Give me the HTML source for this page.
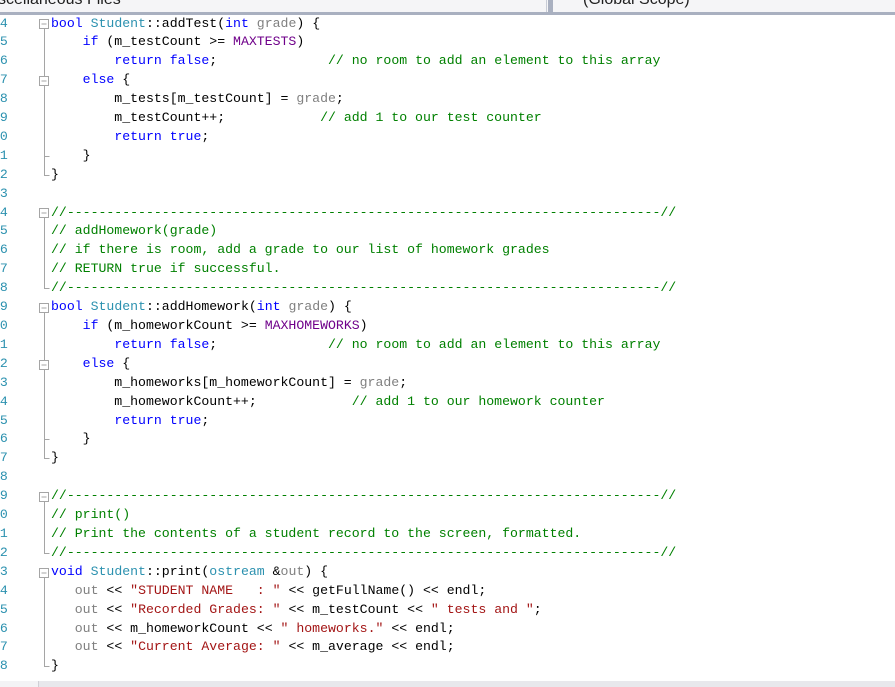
<!DOCTYPE html>
<html><head><meta charset="utf-8"><style>
body{margin:0;width:895px;height:687px;overflow:hidden;background:#fff;position:relative;font-family:"Liberation Mono",monospace}
.top{position:absolute;left:0;top:0;width:895px;height:12px;background:#f5f5f7;overflow:hidden}
.top span{position:absolute;top:-9px;font-family:"Liberation Sans",sans-serif;font-size:16px;color:#1e1e1e}
.bar{position:absolute;left:0;top:12px;width:895px;height:3px;background:#a9b0c0}
.div{position:absolute;left:548px;top:0;width:5px;height:15px;background:#a9b0c0}
.box1{position:absolute;left:0;top:0;width:546px;height:12px;border-right:1px solid #c8ccd6}
pre{position:absolute;left:51px;top:14.5px;margin:0;font-family:"Liberation Mono",monospace;font-size:13.2px;line-height:18.9px;color:#000;white-space:pre}
.ln{position:absolute;left:-8px;top:14.5px;margin:0;font-size:13.2px;line-height:18.9px;color:#2b91af;text-align:right;width:15px;white-space:pre;font-family:"Liberation Mono",monospace}
.k{color:#0000ff}.t{color:#2b91af}.p{color:#808080}.m{color:#6f008a}.c{color:#008000}.s{color:#a31515}
.bot{position:absolute;left:0;top:681px;width:895px;height:6px;background:#e8e8ec}
.bot2{position:absolute;left:0;top:681px;width:38px;height:6px;background:#f3f3f5;border-right:1px solid #d0d0d6}
svg{position:absolute;left:0;top:0}
</style></head><body>
<div class="top"><div class="box1"></div><span style="left:-2px">scellaneous Files</span><span style="left:583px">(Global Scope)</span></div>
<div class="div"></div>
<div class="bar"></div>
<pre class="ln">14
15
16
17
18
19
20
21
22
23
24
25
26
27
28
29
30
31
32
33
34
35
36
37
38
39
40
41
42
43
44
45
46
47
48</pre>
<svg width="895" height="687" fill="none" stroke="#a5a5a5" stroke-width="1">
<rect x="39.5" y="19.5" width="9" height="9" fill="#fff"/><path d="M41.5 24h5"/><path d="M44.5 29V175.5h5"/>
<rect x="39.5" y="76.5" width="9" height="9" fill="#fff"/><path d="M41.5 81h5"/><path d="M44.5 86V156.5h5"/>
<rect x="39.5" y="208.5" width="9" height="9" fill="#fff"/><path d="M41.5 213h5"/><path d="M44.5 218V288.5h5"/>
<rect x="39.5" y="303.5" width="9" height="9" fill="#fff"/><path d="M41.5 308h5"/><path d="M44.5 313V458.5h5"/>
<rect x="39.5" y="360.5" width="9" height="9" fill="#fff"/><path d="M41.5 365h5"/><path d="M44.5 370V439.5h5"/>
<rect x="39.5" y="492.5" width="9" height="9" fill="#fff"/><path d="M41.5 497h5"/><path d="M44.5 502V553.5h5"/>
<rect x="39.5" y="568.5" width="9" height="9" fill="#fff"/><path d="M41.5 573h5"/><path d="M44.5 578V666.5h5"/>
</svg>
<pre><span class="k">bool</span> <span class="t">Student</span>::addTest(<span class="k">int</span> <span class="p">grade</span>) {
    <span class="k">if</span> (m_testCount &gt;= <span class="m">MAXTESTS</span>)
        <span class="k">return</span> <span class="k">false</span>;              <span class="c">// no room to add an element to this array</span>
    <span class="k">else</span> {
        m_tests[m_testCount] = <span class="p">grade</span>;
        m_testCount++;            <span class="c">// add 1 to our test counter</span>
        <span class="k">return</span> <span class="k">true</span>;
    }
}

<span class="c">//---------------------------------------------------------------------------//</span>
<span class="c">// addHomework(grade)</span>
<span class="c">// if there is room, add a grade to our list of homework grades</span>
<span class="c">// RETURN true if successful.</span>
<span class="c">//---------------------------------------------------------------------------//</span>
<span class="k">bool</span> <span class="t">Student</span>::addHomework(<span class="k">int</span> <span class="p">grade</span>) {
    <span class="k">if</span> (m_homeworkCount &gt;= <span class="m">MAXHOMEWORKS</span>)
        <span class="k">return</span> <span class="k">false</span>;              <span class="c">// no room to add an element to this array</span>
    <span class="k">else</span> {
        m_homeworks[m_homeworkCount] = <span class="p">grade</span>;
        m_homeworkCount++;            <span class="c">// add 1 to our homework counter</span>
        <span class="k">return</span> <span class="k">true</span>;
    }
}

<span class="c">//---------------------------------------------------------------------------//</span>
<span class="c">// print()</span>
<span class="c">// Print the contents of a student record to the screen, formatted.</span>
<span class="c">//---------------------------------------------------------------------------//</span>
<span class="k">void</span> <span class="t">Student</span>::print(<span class="t">ostream</span> &amp;<span class="p">out</span>) {
   <span class="p">out</span> &lt;&lt; <span class="s">"STUDENT NAME   : "</span> &lt;&lt; getFullName() &lt;&lt; endl;
   <span class="p">out</span> &lt;&lt; <span class="s">"Recorded Grades: "</span> &lt;&lt; m_testCount &lt;&lt; <span class="s">" tests and "</span>;
   <span class="p">out</span> &lt;&lt; m_homeworkCount &lt;&lt; <span class="s">" homeworks."</span> &lt;&lt; endl;
   <span class="p">out</span> &lt;&lt; <span class="s">"Current Average: "</span> &lt;&lt; m_average &lt;&lt; endl;
}</pre>
<div class="bot"></div><div class="bot2"></div>
</body></html>
